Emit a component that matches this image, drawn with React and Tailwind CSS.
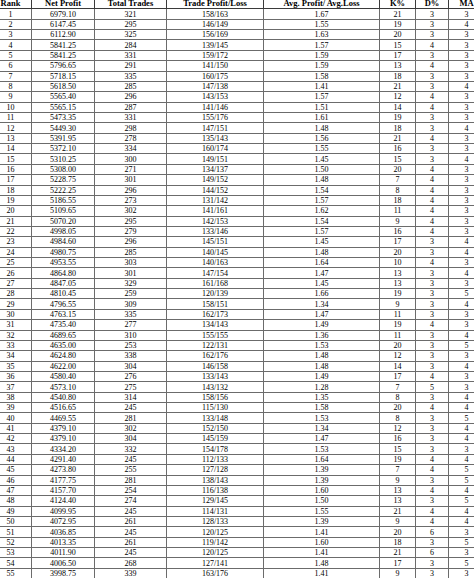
const headers = ["Rank", "Net Profit", "Total Trades", "Trade Profit/Loss", "Avg. Profit/ Avg.Loss", "K%", "D%", "MA"];

// column widths in px, first column starts off screen
const widths = [42, 63, 72, 97, 116, 36, 33, 36];

const raw = `6979.10 321 158/163 1.67 21 3 3
6147.45 295 146/149 1.55 19 3 4
6112.90 325 156/169 1.63 20 3 3
5841.25 284 139/145 1.57 15 4 3
5841.25 331 159/172 1.59 17 3 3
5796.65 291 141/150 1.59 13 4 3
5718.15 335 160/175 1.58 18 3 3
5618.50 285 147/138 1.41 21 3 4
5565.40 296 143/153 1.57 12 4 3
5565.15 287 141/146 1.51 14 4 3
5473.35 331 155/176 1.61 19 3 3
5449.30 298 147/151 1.48 18 3 4
5391.95 278 135/143 1.56 21 4 3
5372.10 334 160/174 1.55 16 3 3
5310.25 300 149/151 1.45 15 3 4
5308.00 271 134/137 1.50 20 4 3
5228.75 301 149/152 1.48 7 4 3
5222.25 296 144/152 1.54 8 4 3
5186.55 273 131/142 1.57 18 4 3
5109.65 302 141/161 1.62 11 4 3
5070.20 295 142/153 1.54 9 4 3
4998.05 279 133/146 1.57 16 4 3
4984.60 296 145/151 1.45 17 3 4
4980.75 285 140/145 1.48 20 3 4
4953.55 303 140/163 1.64 10 4 3
4864.80 301 147/154 1.47 13 3 4
4847.05 329 161/168 1.45 13 3 3
4810.45 259 120/139 1.66 19 3 5
4796.55 309 158/151 1.34 9 3 4
4763.15 335 162/173 1.47 11 3 3
4735.40 277 134/143 1.49 19 4 3
4689.65 310 155/155 1.36 11 3 4
4635.00 253 122/131 1.53 20 3 5
4624.80 338 162/176 1.48 12 3 3
4622.00 304 146/158 1.48 14 3 4
4580.40 276 133/143 1.49 17 4 3
4573.10 275 143/132 1.28 7 5 3
4540.80 314 158/156 1.35 8 3 4
4516.65 245 115/130 1.58 20 4 4
4469.55 281 133/148 1.53 8 3 5
4379.10 302 152/150 1.34 12 3 4
4379.10 304 145/159 1.47 16 3 4
4334.20 332 154/178 1.53 15 3 3
4291.40 245 112/133 1.64 19 4 4
4273.80 255 127/128 1.39 7 4 5
4177.75 281 138/143 1.39 9 3 5
4157.70 254 116/138 1.60 13 4 4
4124.40 274 129/145 1.50 13 3 5
4099.95 245 114/131 1.55 21 4 4
4072.95 261 128/133 1.39 9 4 4
4036.85 245 120/125 1.41 20 6 3
4013.35 261 119/142 1.60 18 3 5
4011.90 245 120/125 1.41 21 6 3
4006.50 268 127/141 1.48 17 3 5
3998.75 339 163/176 1.41 9 3 3`;

const rows = raw.split("\n").map((line, i) => [String(i + 1), ...line.trim().split(" ")]);

export default function App() {
  return (
    <div
      className="w-[474px] h-[578px] overflow-hidden bg-white text-black"
      style={{ fontFamily: '"Liberation Serif", "Times New Roman", serif' }}
    >
      <table className="table-fixed border-collapse -ml-[11px] -mt-[2px] w-[495px]">
        <colgroup>
          {widths.map((w, i) => (
            <col key={i} style={{ width: w }} />
          ))}
        </colgroup>
        <thead>
          <tr className="h-[10.4px]">
            {headers.map((h) => (
              <th
                key={h}
                className="border border-[#3a3a3a] border-b-[1.5px] p-0 text-center text-[8.5px] leading-[9px] font-bold whitespace-nowrap"
              >
                {h}
              </th>
            ))}
          </tr>
        </thead>
        <tbody>
          {rows.map((r) => (
            <tr key={r[0]} className="h-[10.37px]">
              {r.map((c, j) => (
                <td
                  key={j}
                  className="border border-[#6b6b6b] p-0 text-center text-[8px] leading-[9px] whitespace-nowrap"
                >
                  {c}
                </td>
              ))}
            </tr>
          ))}
        </tbody>
      </table>
    </div>
  );
}
